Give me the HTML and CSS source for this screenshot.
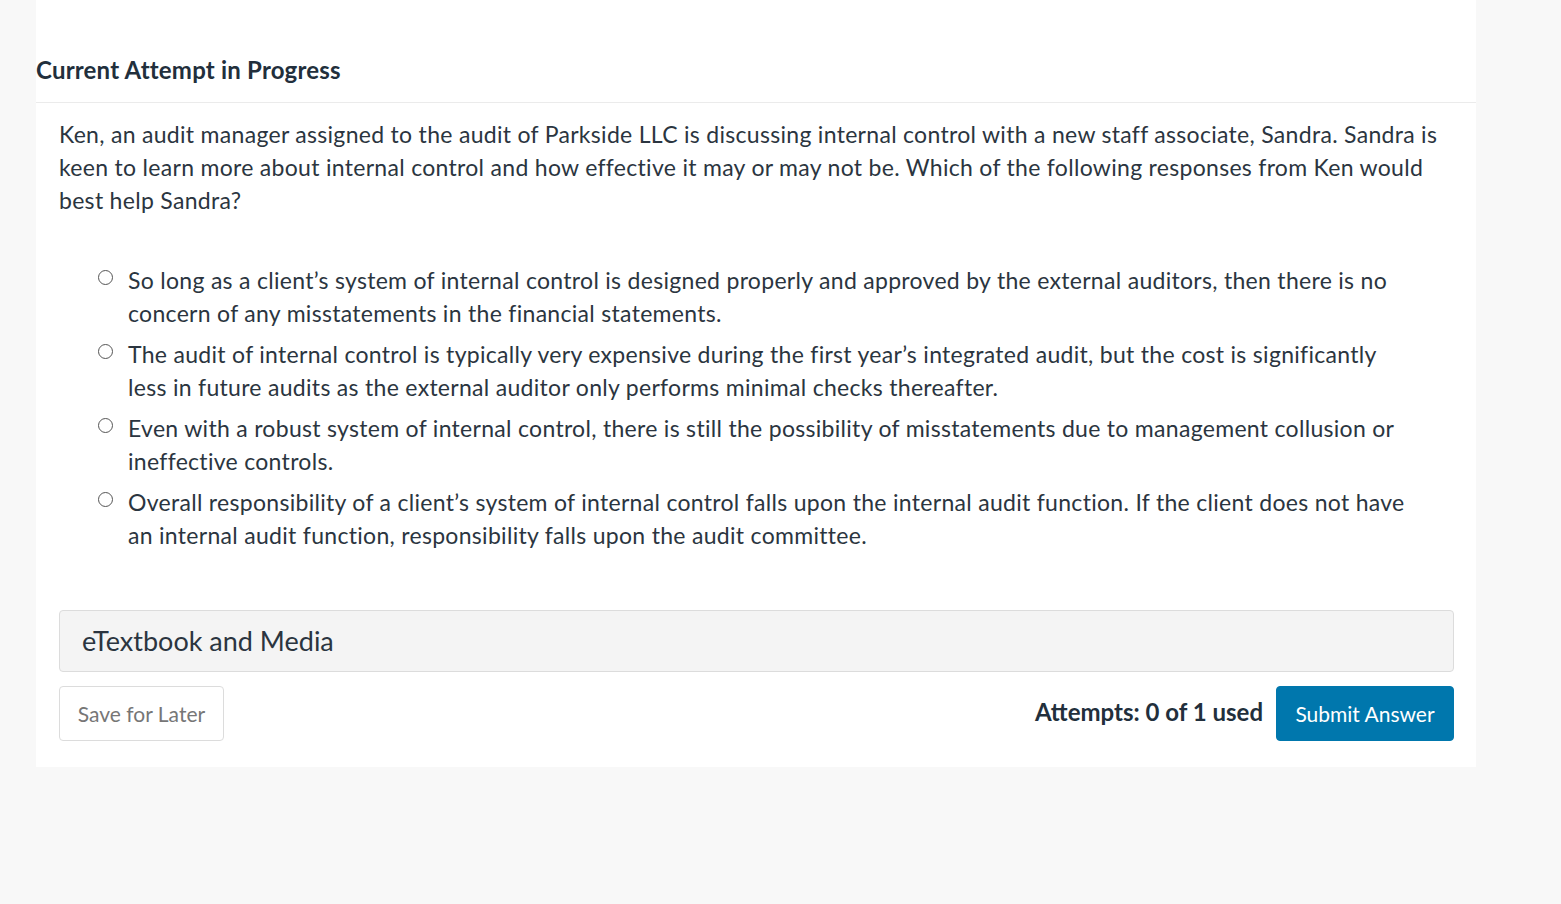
FILE: index.html
```html
<!DOCTYPE html>
<html lang="en">
<head>
<meta charset="utf-8">
<title>Current Attempt in Progress</title>
<link rel="stylesheet" href="styles.css">
</head>
<body>
<div class="page">
  <main class="card">
    <h2 class="attempt-title">Current Attempt in Progress</h2>
    <section class="question">
      <p class="stem">Ken, an audit manager assigned to the audit of Parkside LLC is discussing internal control with a new staff associate, Sandra. Sandra is keen to learn more about internal control and how effective it may or may not be. Which of the following responses from Ken would best help Sandra?</p>
      <ul class="choices">
        <li class="choice"><span class="radio"></span><span class="choice-text">So long as a client’s system of internal control is designed properly and approved by the external auditors, then there is no concern of any misstatements in the financial statements.</span></li>
        <li class="choice"><span class="radio"></span><span class="choice-text">The audit of internal control is typically very expensive during the first year’s integrated audit, but the cost is significantly less in future audits as the external auditor only performs minimal checks thereafter.</span></li>
        <li class="choice"><span class="radio"></span><span class="choice-text">Even with a robust system of internal control, there is still the possibility of misstatements due to management collusion or ineffective controls.</span></li>
        <li class="choice"><span class="radio"></span><span class="choice-text">Overall responsibility of a client’s system of internal control falls upon the internal audit function. If the client does not have an internal audit function, responsibility falls upon the audit committee.</span></li>
      </ul>
      <div class="media-box">eTextbook and Media</div>
      <div class="actions">
        <button class="btn btn-secondary">Save for Later</button>
        <div class="submit-group">
          <span class="attempts">Attempts: 0 of 1 used</span>
          <button class="btn btn-primary">Submit Answer</button>
        </div>
      </div>
    </section>
  </main>
</div>
</body>
</html>
```

FILE: styles.css
```css
html, body {
  margin: 0;
  padding: 0;
}
body {
  background: #f8f8f8;
  font-family: Lato, "Open Sans", "Liberation Sans", sans-serif;
  color: #2b3540;
  width: 1561px;
  height: 904px;
  overflow: hidden;
}
.page {
  padding-left: 36px;
}
.card {
  width: 1440px;
  background: #ffffff;
  padding-top: 53px;
  padding-bottom: 26px;
}
.attempt-title {
  margin: 0;
  font-size: 24px;
  font-weight: 700;
  letter-spacing: 0.2px;
  line-height: 34px;
  color: #222f3c;
  padding-bottom: 15px;
  border-bottom: 1px solid #ebebeb;
}
.question {
  padding: 15px 22px 0 23px;
}
.stem {
  margin: 0;
  font-size: 23px;
  line-height: 33px;
  letter-spacing: 0.3px;
}
.choices {
  list-style: none;
  margin: 47px 0 0 0;
  padding: 0 44px 0 39px;
}
.choice {
  display: flex;
  align-items: flex-start;
  font-size: 23px;
  line-height: 33px;
  letter-spacing: 0.3px;
  margin-bottom: 8px;
}
.radio {
  flex: none;
  width: 15px;
  height: 15px;
  border: 1.6px solid #555555;
  border-radius: 50%;
  margin-top: 6px;
  margin-right: 15px;
  box-sizing: border-box;
}
.choice-text {
  flex: 1;
}
.media-box {
  margin-top: 58px;
  box-sizing: border-box;
  height: 62px;
  background: #f4f4f4;
  border: 1px solid #dcdcdc;
  border-radius: 4px;
  padding-left: 22px;
  font-size: 27px;
  line-height: 60px;
  color: #2b3540;
}
.actions {
  margin-top: 14px;
  display: flex;
  justify-content: space-between;
  align-items: center;
}
.btn {
  font-family: Lato, "Open Sans", "Liberation Sans", sans-serif;
  font-size: 21px;
  height: 55px;
  border-radius: 4px;
  cursor: pointer;
}
.btn-secondary {
  background: #ffffff;
  border: 1px solid #dcdcdc;
  color: #767676;
  padding: 0;
  width: 165px;
}
.submit-group {
  display: flex;
  align-items: center;
  gap: 13px;
}
.attempts {
  font-size: 24px;
  font-weight: 700;
  color: #222f3c;
  margin-top: -5px;
}
.btn-primary {
  background: #0077ad;
  border: 1px solid #0077ad;
  color: #ffffff;
  width: 178px;
  padding: 0;
}
```
